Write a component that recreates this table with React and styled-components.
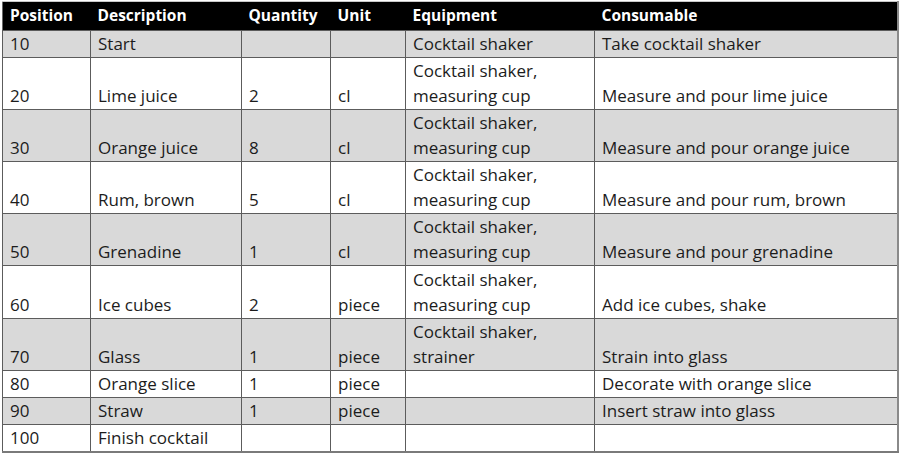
import React from "react";
import styled, { createGlobalStyle } from "styled-components";

const Global = createGlobalStyle`
  html, body { margin: 0; padding: 0; background: #ffffff; }
  body { font-family: "Open Sans", "Noto Sans", "Liberation Sans", sans-serif; }
`;

const Page = styled.div`
  padding: 1px 0 0 2px;
`;

const Table = styled.table`
  border-collapse: collapse;
  table-layout: fixed;
  width: 895px;
  border-top: 1px solid #c8c8c8;
  border-left: 1px solid #6a6a6a;
  border-right: 2px solid #8a8a8a;
  border-bottom: 2px solid #7a7a7a;
  font-size: 17px;
  color: #1c1c1c;
`;

const HeadRow = styled.tr`
  height: 29px;
  background: #000000;
`;

const HeadCell = styled.th`
  color: #ffffff;
  font-size: 15.5px;
  font-weight: 700;
  text-align: left;
  vertical-align: bottom;
  padding: 0 0 5px 7px;
  line-height: 20px;
  white-space: nowrap;
`;

const Row = styled.tr`
  height: ${(p) => p.$h}px;
  background: ${(p) => (p.$shade ? "#d9d9d9" : "#ffffff")};
`;

const Cell = styled.td`
  border: 1px solid #5c5c5c;
  vertical-align: bottom;
  padding: 0 4px 1px 7px;
  line-height: 25px;
  white-space: nowrap;
  overflow: hidden;
`;

const columns = [
  { label: "Position", width: 88 },
  { label: "Description", width: 151 },
  { label: "Quantity", width: 89 },
  { label: "Unit", width: 75 },
  { label: "Equipment", width: 189 },
  { label: "Consumable", width: 303 },
];

const rows = [
  { h: 27, c: ["10", "Start", "", "", ["Cocktail shaker"], "Take cocktail shaker"] },
  { h: 52, c: ["20", "Lime juice", "2", "cl", ["Cocktail shaker,", "measuring cup"], "Measure and pour lime juice"] },
  { h: 52, c: ["30", "Orange juice", "8", "cl", ["Cocktail shaker,", "measuring cup"], "Measure and pour orange juice"] },
  { h: 52, c: ["40", "Rum, brown", "5", "cl", ["Cocktail shaker,", "measuring cup"], "Measure and pour rum, brown"] },
  { h: 52, c: ["50", "Grenadine", "1", "cl", ["Cocktail shaker,", "measuring cup"], "Measure and pour grenadine"] },
  { h: 53, c: ["60", "Ice cubes", "2", "piece", ["Cocktail shaker,", "measuring cup"], "Add ice cubes, shake"] },
  { h: 52, c: ["70", "Glass", "1", "piece", ["Cocktail shaker,", "strainer"], "Strain into glass"] },
  { h: 27, c: ["80", "Orange slice", "1", "piece", [], "Decorate with orange slice"] },
  { h: 27, c: ["90", "Straw", "1", "piece", [], "Insert straw into glass"] },
  { h: 27, c: ["100", "Finish cocktail", "", "", [], ""] },
];

export default function App() {
  return (
    <>
      <Global />
      <Page>
        <Table>
          <colgroup>
            {columns.map((c) => (
              <col key={c.label} style={{ width: c.width }} />
            ))}
          </colgroup>
          <thead>
            <HeadRow>
              {columns.map((c) => (
                <HeadCell key={c.label}>{c.label}</HeadCell>
              ))}
            </HeadRow>
          </thead>
          <tbody>
            {rows.map(({ h, c }, i) => (
              <Row key={c[0]} $h={h} $shade={i % 2 === 0}>
                <Cell>{c[0]}</Cell>
                <Cell>{c[1]}</Cell>
                <Cell>{c[2]}</Cell>
                <Cell>{c[3]}</Cell>
                <Cell>
                  {c[4].map((line, j) => (
                    <React.Fragment key={j}>
                      {j > 0 && <br />}
                      {line}
                    </React.Fragment>
                  ))}
                </Cell>
                <Cell>{c[5]}</Cell>
              </Row>
            ))}
          </tbody>
        </Table>
      </Page>
    </>
  );
}
